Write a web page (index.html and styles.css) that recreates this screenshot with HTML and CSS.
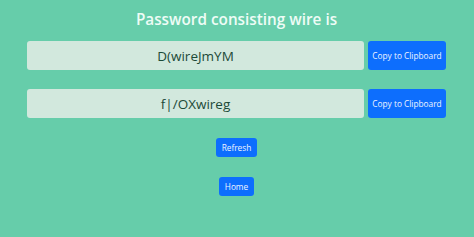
FILE: index.html
```html
<!DOCTYPE html>
<html>
<head>
<meta charset="utf-8">
<link rel="stylesheet" href="styles.css">
</head>
<body>
<div class="page">
  <h1 class="title">Password consisting wire is</h1>
  <div class="row">
    <div class="field">D(wireJmYM</div>
    <button class="btn copy">Copy to Clipboard</button>
  </div>
  <div class="row">
    <div class="field">f|/OXwireg</div>
    <button class="btn copy">Copy to Clipboard</button>
  </div>
  <div class="actions">
    <button class="btn small">Refresh</button>
    <button class="btn small">Home</button>
  </div>
</div>
</body>
</html>
```
FILE: styles.css
```css
html, body {
  margin: 0;
  padding: 0;
  background: #66cdaa;
  font-family: "Open Sans", "Noto Sans", sans-serif;
}
.page {
  width: 474px;
  height: 237px;
  box-sizing: border-box;
  padding: 6px 28px 0 27px;
  display: flex;
  flex-direction: column;
}
.title {
  margin: 0;
  text-align: center;
  font-size: 15.3px;
  line-height: 26px;
  font-weight: 600;
  color: #eefcf6;
}
.row {
  display: flex;
  gap: 4px;
  margin-top: 9px;
  height: 29px;
}
.row + .row {
  margin-top: 19px;
}
.field {
  flex: 1;
  background: #d2e8dd;
  border-radius: 3px;
  display: flex;
  align-items: center;
  justify-content: center;
  font-size: 13.5px;
  font-weight: 500;
  color: #1c4a38;
}
.btn {
  border: none;
  background: #0d6efd;
  color: #eef5ff;
  font-family: "Open Sans", "Noto Sans", sans-serif;
  font-weight: 500;
  border-radius: 3px;
  padding: 0;
  cursor: pointer;
}
.copy {
  width: 78px;
  font-size: 8.3px;
}
.actions {
  display: flex;
  flex-direction: column;
  align-items: center;
  gap: 20px;
  margin-top: 20px;
}
.small {
  height: 19px;
  font-size: 8.3px;
  padding: 0 6px;
}
```
